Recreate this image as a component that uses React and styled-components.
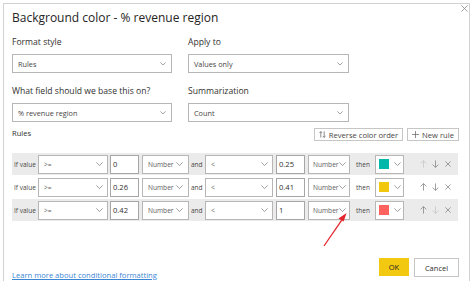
import React from 'react';
import styled, { createGlobalStyle } from 'styled-components';

const Global = createGlobalStyle`
  html, body { margin: 0; padding: 0; background: #fff; }
  body { font-family: "Open Sans", "Noto Sans", sans-serif; color: #252423; overflow: hidden; }
  * { box-sizing: border-box; }
`;

const Dialog = styled.div`
  position: relative;
  margin: 3px 0 0 3px;
  width: 467px;
  height: 290px;
  border: 1px solid #d4d2d0;
  border-bottom: none;
  padding: 6px 10px 0 8px;
  background: #fff;
`;

const Close = styled.button`
  position: absolute;
  left: 457px;
  top: 1px;
  width: 7px;
  height: 7px;
  padding: 0;
  border: none;
  background: none;
  display: flex;
`;

const Title = styled.h1`
  margin: 0;
  font-size: 12px;
  line-height: 16px;
  font-weight: 400;
  color: #252423;
`;

const FieldGrid = styled.div`
  display: grid;
  grid-template-columns: 160px 161px;
  column-gap: 16px;
  row-gap: 12px;
  margin-top: 10px;
`;

const Field = styled.div`
  display: flex;
  flex-direction: column;
`;

const Label = styled.div`
  font-size: 8.6px;
  line-height: 12px;
  color: #323130;
  margin-bottom: 6px;
  white-space: nowrap;
`;

const Select = styled.div`
  height: 19px;
  border: 1px solid #b8b6b4;
  display: flex;
  align-items: center;
  justify-content: space-between;
  padding: 0 5px 0 5px;
  font-size: 7.3px;
  color: #484644;
  background: #fff;
`;

const ChevronSvg = styled.svg`
  flex: none;
  display: block;
`;

const Chevron = ({ w = 6, h = 3.5 }) => (
  <ChevronSvg width={w} height={h} viewBox={`0 0 ${w} ${h}`}>
    <polyline
      points={`0.4,0.4 ${w / 2},${h - 0.4} ${w - 0.4},0.4`}
      fill="none"
      stroke="#8a8886"
      strokeWidth="0.8"
    />
  </ChevronSvg>
);

const Header = styled.div`
  display: flex;
  align-items: flex-start;
  margin-top: 6px;
  width: 447px;
`;

const RulesLabel = styled.div`
  flex: 1;
  font-size: 7.6px;
  line-height: 11px;
  color: #323130;
`;

const SmallButton = styled.button`
  height: 13px;
  width: ${p => p.$w}px;
  margin-left: ${p => p.$ml || 0}px;
  border: 1px solid #c8c6c4;
  background: #fff;
  display: flex;
  align-items: center;
  justify-content: center;
  gap: 3px;
  padding: 0;
  font-family: inherit;
  font-size: 7.6px;
  color: #484644;
  white-space: nowrap;
`;

const Rows = styled.div`
  display: flex;
  flex-direction: column;
  gap: 1px;
  margin-top: 12px;
`;

const Row = styled.div`
  display: flex;
  align-items: center;
  height: 22px;
  width: 446px;
  background: ${p => (p.$shaded ? '#ebebeb' : 'transparent')};
`;

const RowText = styled.div`
  width: ${p => p.$w}px;
  padding-left: ${p => p.$pl}px;
  font-size: 6.5px;
  color: #484644;
  white-space: nowrap;
  flex: none;
`;

const RowSelect = styled.div`
  flex: none;
  width: ${p => p.$w}px;
  margin-left: ${p => p.$ml || 0}px;
  height: 19px;
  border: 1px solid #b8b6b4;
  background: #fff;
  display: flex;
  align-items: center;
  justify-content: space-between;
  padding: 0 ${p => p.$pr || 4}px 0 ${p => p.$pl || 5}px;
  font-size: ${p => p.$fs || 6.6}px;
  color: #605e5c;
`;

const ValueInput = styled.div`
  flex: none;
  width: ${p => p.$w}px;
  margin-left: ${p => p.$ml || 0}px;
  height: 19px;
  border: 1px solid #a8a6a4;
  background: #fff;
  display: flex;
  align-items: center;
  padding-left: 2px;
  font-size: 7.6px;
  color: #323130;
`;

const Swatch = styled.span`
  width: 10px;
  height: 10px;
  background: ${p => p.$c};
  display: block;
`;

const Actions = styled.div`
  display: flex;
  align-items: center;
  padding-left: 16px;
`;

const ActionIcon = styled.svg`
  display: block;
  margin-left: ${p => p.$ml || 0}px;
`;

const Footer = styled.div`
  display: flex;
  align-items: flex-start;
  margin-top: 37px;
  width: 447px;
`;

const Link = styled.a`
  flex: 1;
  margin-top: 12px;
  font-size: 7.6px;
  line-height: 11px;
  color: #3a86d4;
  text-decoration: underline;
`;

const OkButton = styled.button`
  width: 30px;
  height: 18px;
  border: none;
  background: #f2c811;
  font-family: inherit;
  font-size: 7.5px;
  color: #252423;
  padding: 0;
`;

const CancelButton = styled.button`
  width: 45px;
  height: 19px;
  margin-left: 5px;
  border: 1px solid #c8c6c4;
  background: #fff;
  font-family: inherit;
  font-size: 7.5px;
  color: #323130;
  padding: 0;
`;

const Annotation = styled.svg`
  position: absolute;
  left: 312px;
  top: 201px;
  overflow: visible;
`;

const UpIcon = ({ c, ml }) => (
  <ActionIcon $ml={ml} width="7" height="8" viewBox="0 0 7 8">
    <path d="M3.5 7.6V0.6M0.6 3.4L3.5 0.6L6.4 3.4" fill="none" stroke={c} strokeWidth="0.8" />
  </ActionIcon>
);
const DownIcon = ({ c, ml }) => (
  <ActionIcon $ml={ml} width="7" height="8" viewBox="0 0 7 8">
    <path d="M3.5 0.4V7.4M0.6 4.6L3.5 7.4L6.4 4.6" fill="none" stroke={c} strokeWidth="0.8" />
  </ActionIcon>
);
const XIcon = ({ c, ml, s = 6 }) => (
  <ActionIcon $ml={ml} width={s} height={s} viewBox="0 0 6 6">
    <path d="M0.4 0.4L5.6 5.6M5.6 0.4L0.4 5.6" fill="none" stroke={c} strokeWidth="0.8" />
  </ActionIcon>
);

const rules = [
  { lo: '0', hi: '0.25', color: '#01b8aa', up: '#c8c6c4', down: '#8a8886', shaded: true },
  { lo: '0.26', hi: '0.41', color: '#f2c80f', up: '#8a8886', down: '#8a8886', shaded: false },
  { lo: '0.42', hi: '1', color: '#fd625e', up: '#8a8886', down: '#c8c6c4', shaded: true },
];

export default function App() {
  return (
    <>
      <Global />
      <Dialog>
        <Close aria-label="Close">
          <svg width="7" height="7" viewBox="0 0 7 7">
            <path d="M0.4 0.4L6.6 6.6M6.6 0.4L0.4 6.6" stroke="#8a8886" strokeWidth="0.8" fill="none" />
          </svg>
        </Close>
        <Title>Background color - % revenue region</Title>
        <FieldGrid>
          <Field>
            <Label>Format style</Label>
            <Select>Rules<Chevron /></Select>
          </Field>
          <Field>
            <Label>Apply to</Label>
            <Select>Values only<Chevron /></Select>
          </Field>
          <Field>
            <Label>What field should we base this on?</Label>
            <Select>% revenue region<Chevron /></Select>
          </Field>
          <Field>
            <Label>Summarization</Label>
            <Select>Count<Chevron /></Select>
          </Field>
        </FieldGrid>
        <Header>
          <RulesLabel>Rules</RulesLabel>
          <SmallButton $w={89}>
            <svg width="7" height="7" viewBox="0 0 7 7">
              <path d="M1.8 6.6V0.6M0.4 2L1.8 0.6L3.2 2M5.2 0.4V6.4M3.8 5L5.2 6.4L6.6 5" fill="none" stroke="#605e5c" strokeWidth="0.7" />
            </svg>
            Reverse color order
          </SmallButton>
          <SmallButton $w={52} $ml={4}>
            <svg width="7" height="7" viewBox="0 0 7 7">
              <path d="M3.5 0V7M0 3.5H7" fill="none" stroke="#605e5c" strokeWidth="0.7" />
            </svg>
            New rule
          </SmallButton>
        </Header>
        <Rows>
          {rules.map((r, i) => (
            <Row key={i} $shaded={r.shaded}>
              <RowText $w={26} $pl={2}>If value</RowText>
              <RowSelect $w={70}>&gt;=<Chevron w={7} h={4} /></RowSelect>
              <ValueInput $w={29} $ml={2}>{r.lo}</ValueInput>
              <RowSelect $w={47} $ml={3} $pr={5}>Number<Chevron w={7} h={4} /></RowSelect>
              <RowText $w={16} $pl={2}>and</RowText>
              <RowSelect $w={68}>&lt;<Chevron w={7} h={4} /></RowSelect>
              <ValueInput $w={29} $ml={3}>{r.hi}</ValueInput>
              <RowSelect $w={42} $ml={3} $pr={3} $pl={4}>Number<Chevron w={7} h={4} /></RowSelect>
              <RowText $w={25} $pl={6}>then</RowText>
              <RowSelect $w={29} $pl={3} $pr={2}>
                <Swatch $c={r.color} />
                <Chevron w={7} h={4} />
              </RowSelect>
              <Actions>
                <UpIcon c={r.up} />
                <DownIcon c={r.down} ml={4.5} />
                <XIcon c="#8a8886" ml={6} />
              </Actions>
            </Row>
          ))}
        </Rows>
        <Footer>
          <Link href="#">Learn more about conditional formatting</Link>
          <OkButton>OK</OkButton>
          <CancelButton>Cancel</CancelButton>
        </Footer>
        <Annotation width="35" height="48" viewBox="0 0 35 48">
          <line x1="8" y1="41" x2="25.9" y2="14.8" stroke="#e3262b" strokeWidth="1.3" />
          <polygon points="30.6,8 27.6,16.6 22.4,13.4" fill="#e3262b" />
        </Annotation>
      </Dialog>
    </>
  );
}
